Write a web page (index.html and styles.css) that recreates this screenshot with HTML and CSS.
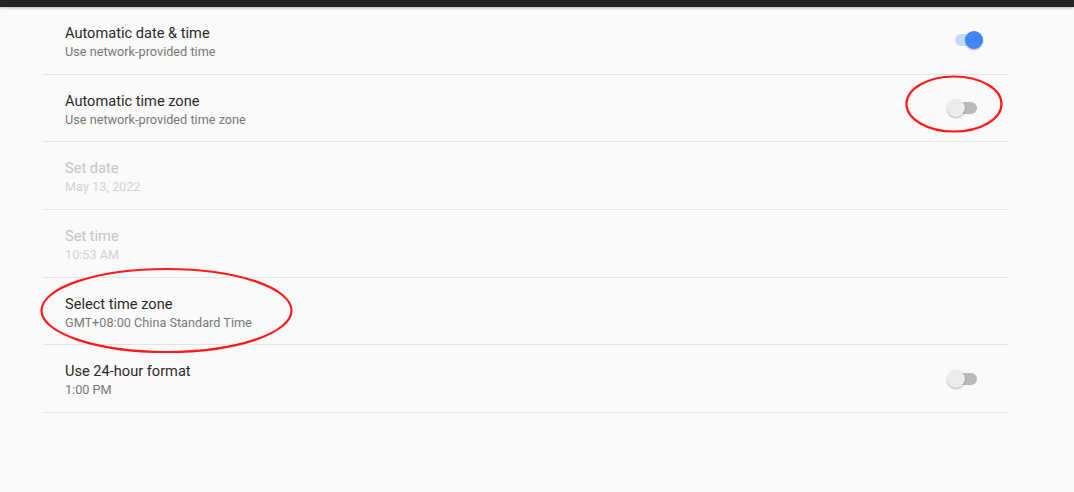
FILE: index.html
```html
<!DOCTYPE html>
<html lang="en">
<head>
<meta charset="utf-8">
<title>Date &amp; time</title>
<link rel="stylesheet" href="styles.css">
</head>
<body>
<div class="topbar"></div>
<div class="list">
  <div class="row">
    <div class="text">
      <div class="title">Automatic date &amp; time</div>
      <div class="summary">Use network-provided time</div>
    </div>
    <div class="switch on"><span class="track"></span><span class="thumb"></span></div>
  </div>
  <div class="row">
    <div class="text">
      <div class="title">Automatic time zone</div>
      <div class="summary">Use network-provided time zone</div>
    </div>
    <div class="switch"><span class="track"></span><span class="thumb"></span></div>
  </div>
  <div class="row disabled">
    <div class="text">
      <div class="title">Set date</div>
      <div class="summary">May 13, 2022</div>
    </div>
  </div>
  <div class="row disabled">
    <div class="text">
      <div class="title">Set time</div>
      <div class="summary">10:53 AM</div>
    </div>
  </div>
  <div class="row">
    <div class="text">
      <div class="title">Select time zone</div>
      <div class="summary">GMT+08:00 China Standard Time</div>
    </div>
  </div>
  <div class="row">
    <div class="text">
      <div class="title">Use 24-hour format</div>
      <div class="summary">1:00 PM</div>
    </div>
    <div class="switch"><span class="track"></span><span class="thumb"></span></div>
  </div>
</div>
<svg class="annotations" width="1074" height="492" viewBox="0 0 1074 492">
  <ellipse cx="954" cy="104" rx="47.5" ry="27.5" fill="none" stroke="#ff1a1a" stroke-width="2.2"/>
  <ellipse cx="166.5" cy="310.5" rx="125" ry="41.5" fill="none" stroke="#ff1a1a" stroke-width="2.2"/>
</svg>
</body>
</html>
```
FILE: styles.css
```css
html, body {
  margin: 0;
  padding: 0;
}
body {
  width: 1074px;
  height: 492px;
  overflow: hidden;
  background: #fafafa;
  font-family: Roboto, "Noto Sans", "Liberation Sans", sans-serif;
  position: relative;
}
.topbar {
  height: 7px;
  background: #262626;
  box-shadow: 0 1px 3px rgba(0, 0, 0, 0.25);
  position: relative;
  z-index: 1;
}
.list {
  margin-left: 43px;
  width: 965px;
}
.row {
  box-sizing: border-box;
  height: calc(406px / 6);
  border-bottom: 1px solid #e3e3e3;
  display: flex;
  align-items: center;
  padding: 0 25px 0 22px;
}
.text {
  flex: 1;
  align-self: flex-start;
  padding-top: 16px;
}
.title {
  font-size: 14.6px;
  line-height: 20px;
  color: #2a2a2a;
}
.summary {
  font-size: 12.7px;
  line-height: 16px;
  margin-top: 1px;
  color: #787878;
}
.disabled .title {
  color: #c4c4c4;
}
.disabled .summary {
  color: #d3d3d3;
}
.switch {
  position: relative;
  width: 36px;
  height: 20px;
}
.track {
  position: absolute;
  left: 8px;
  top: 4px;
  width: 22px;
  height: 12px;
  border-radius: 6px;
  background: #b9b9b9;
}
.thumb {
  position: absolute;
  left: 0;
  top: 1px;
  width: 18px;
  height: 18px;
  border-radius: 50%;
  background: #ececec;
  box-shadow: 0 1px 2px rgba(0, 0, 0, 0.3);
}
.switch.on .track {
  background: #c6d9fa;
}
.switch.on .thumb {
  left: 18px;
  background: #4285f4;
}
.annotations {
  position: absolute;
  left: 0;
  top: 0;
  pointer-events: none;
}
```
